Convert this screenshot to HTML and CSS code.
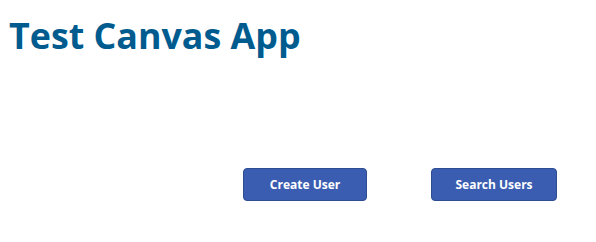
FILE: index.html
```html
<!DOCTYPE html>
<html lang="en">
<head>
    <meta charset="UTF-8">
    <meta name="viewport" content="width=device-width, initial-scale=1.0">
    <title>Test Canvas App</title>
    <link rel="stylesheet" href="styles.css">
</head>
<body>
    <div class="screen">
        <h1 class="title">Test Canvas App</h1>
        <div class="actions">
            <button class="btn create">Create User</button>
            <button class="btn search">Search Users</button>
        </div>
    </div>
</body>
</html>
```
FILE: styles.css
```css
*{margin:0; padding:0; box-sizing: border-box;}
body{background-color: white; font-family: "Open Sans", sans-serif;}
.screen{width:596px; height:242px;}
.title{
    color:#005b8f;
    font-size:35.8px;
    font-weight:700;
    line-height:50px;
    padding:10px 0 0 9px;
}
.actions{
    display:flex;
    margin-top:108px;
    padding-left:243px;
    gap:64px;
}
.btn{
    height:33px;
    background-color:#3a5db1;
    border:1px solid #2d4c92;
    border-radius:4px;
    color:white;
    font-family:"Open Sans", sans-serif;
    font-size:12px;
    font-weight:700;
}
.create{width:124px;}
.search{width:126px;}
```
